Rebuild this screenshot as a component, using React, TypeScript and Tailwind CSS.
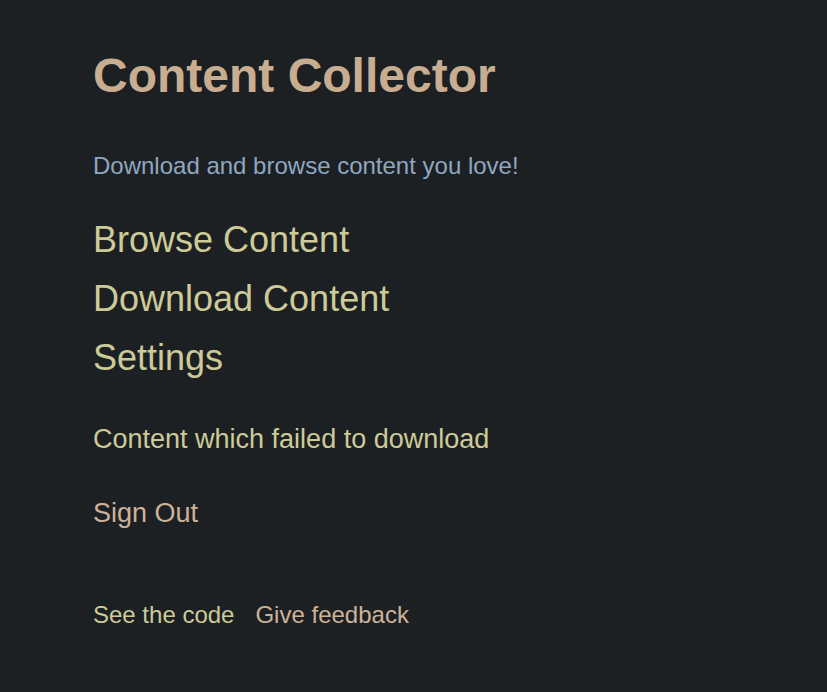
export default function App() {
  return (
    <div className="min-h-[692px] bg-[#1d2023] pl-[93px] pt-[48px] font-['Liberation_Sans',Arial,sans-serif]">
      <h1 className="text-[48px] font-bold leading-[56px] text-[#c8ad90]">Content Collector</h1>
      <p className="mt-[48px] text-[24px] leading-[28px] text-[#8ea7c1]">
        Download and browse content you love!
      </p>
      <nav className="mt-[30px] flex flex-col items-start">
        <a className="text-[36px] leading-[59px] text-[#cccb98]">Browse Content</a>
        <a className="text-[36px] leading-[59px] text-[#cccb98]">Download Content</a>
        <a className="text-[36px] leading-[59px] text-[#cccb98]">Settings</a>
      </nav>
      <a className="mt-[36px] block text-[27px] leading-[32px] text-[#cccb98]">
        Content which failed to download
      </a>
      <button className="mt-[42px] block text-[27px] leading-[32px] text-[#cdb29a]">Sign Out</button>
      <footer className="mt-[72px] flex gap-[21px] text-[24px] leading-[28px]">
        <a className="text-[#cccb98]">See the code</a>
        <a className="text-[#cdb29a]">Give feedback</a>
      </footer>
    </div>
  );
}
